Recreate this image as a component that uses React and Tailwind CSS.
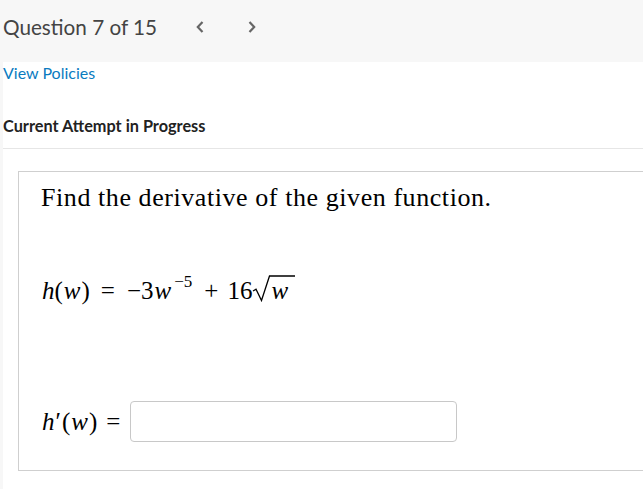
import React from "react";

const serif = { fontFamily: '"Liberation Serif", "DejaVu Serif", serif' };

function Chevron({ dir }) {
  return (
    <svg width="8" height="12" viewBox="0 0 8 12" className="text-[#666]">
      {dir === "left" ? (
        <path d="M6.5 1 L1.8 6 L6.5 11" fill="none" stroke="currentColor" strokeWidth="2.2" />
      ) : (
        <path d="M1.5 1 L6.2 6 L1.5 11" fill="none" stroke="currentColor" strokeWidth="2.2" />
      )}
    </svg>
  );
}

function I({ children, className = "" }) {
  return <span className={"italic " + className}>{children}</span>;
}

function Sqrt({ children }) {
  return (
    <span className="relative inline-block w-[43px] pl-[19px]">
      <svg width="43" height="27" viewBox="0 0 43 27" className="absolute left-0 top-[-1px]">
        <path d="M1 16 L4 14.2 L9.5 25.5 L17.5 1 L43 1" fill="none" stroke="#000" strokeWidth="1.3" strokeLinejoin="miter" />
      </svg>
      {children}
    </span>
  );
}

export default function App() {
  return (
    <div
      className="w-[643px] h-[489px] overflow-hidden bg-[#f7f7f7]"
      style={{ fontFamily: 'Lato, "Open Sans", sans-serif' }}
    >
      <div className="h-[62px] flex items-start pl-[3px] pt-[14px]">
        <span className="text-[20.7px] leading-[26px] text-[#444]">Question 7 of 15</span>
        <div className="ml-[39px] h-[26px] flex items-center gap-[44px]">
          <Chevron dir="left" />
          <Chevron dir="right" />
        </div>
      </div>
      <div className="ml-[3px] bg-white h-[427px] flex flex-col">
        <div className="h-[22px] flex items-center">
          <span className="text-[16px] text-[#0a7bbf]">View Policies</span>
        </div>
        <div className="mt-[32px] h-[20px] flex items-center">
          <span className="text-[16.3px] font-bold text-[#222]">Current Attempt in Progress</span>
        </div>
        <div className="mt-[12px] border-t border-[#e6e6e6]" />
        <div className="mt-[22px] ml-[15px] w-[640px] h-[300px] border border-[#cfcfcf] bg-white text-black" style={serif}>
          <div className="pl-[22px] pt-[10px] text-[26px] leading-[32px] tracking-[0.57px]">
            Find the derivative of the given function.
          </div>
          <div className="pl-[23px] mt-[62px] h-[30px] flex items-baseline text-[25px] leading-[30px]">
            <I>h</I>
            <span>(</span>
            <I className="ml-[1px]">w</I>
            <span className="ml-[1px]">)</span>
            <span className="ml-[11px]">=</span>
            <span className="ml-[12px]">−3</span>
            <I className="ml-[1px]">w</I>
            <span className="ml-[3px] text-[17px] relative -top-[12px]">−5</span>
            <span className="ml-[12px]">+</span>
            <span className="ml-[9px]">16</span>
            <Sqrt>
              <I>w</I>
            </Sqrt>
          </div>
          <div className="pl-[23px] mt-[95px] h-[41px] flex items-center text-[25px] leading-[30px]">
            <I>h</I>
            <span className="ml-[1px]">′</span>
            <span className="ml-[1px]">(</span>
            <I className="ml-[1px]">w</I>
            <span className="ml-[1px]">)</span>
            <span className="ml-[9px]">=</span>
            <div className="ml-[10px] w-[327px] h-[41px] border-[1.5px] border-[#c8c8c8] rounded-[4px] bg-white" />
          </div>
        </div>
      </div>
    </div>
  );
}
